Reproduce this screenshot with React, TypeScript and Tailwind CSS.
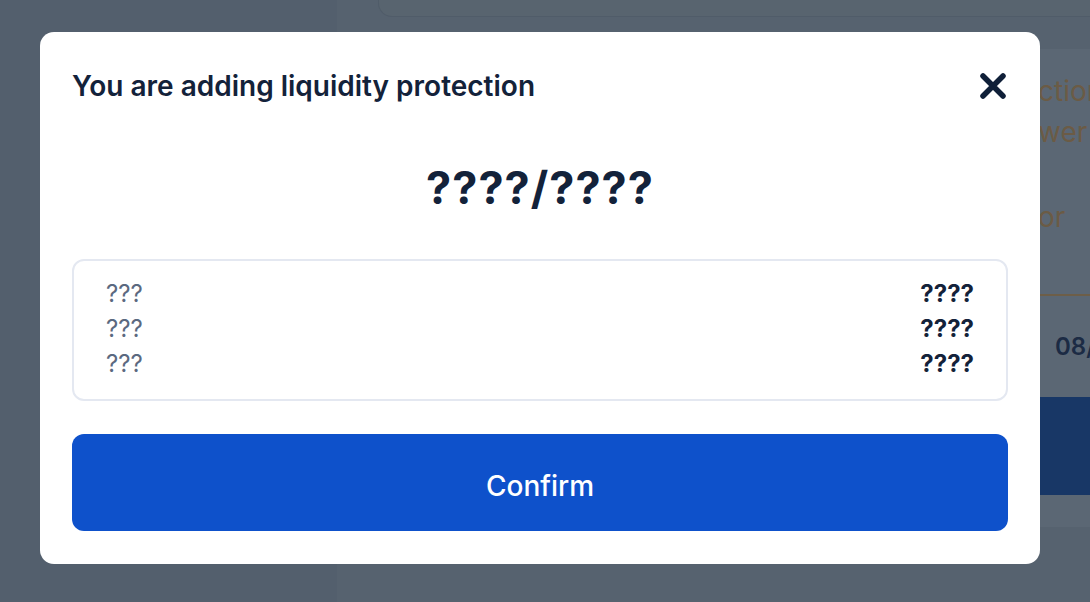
import React from "react"

// Confirm dialog for adding liquidity protection, over a dimmed page.

const rows = [
  { label: "???", value: "????" },
  { label: "???", value: "????" },
  { label: "???", value: "????" },
]

function CloseIcon() {
  return (
    <svg width="28" height="28" viewBox="0 0 28 28" fill="none">
      <path d="M4 4L24 24M24 4L4 24" stroke="#0f1f38" strokeWidth="5.5" strokeLinecap="round" />
    </svg>
  )
}

function Backdrop() {
  return (
    <div className="flex h-full w-full">
      <aside className="w-[337px] shrink-0 h-full bg-[#535f6d]" />
      <main className="flex-1 flex flex-col pl-[41px] overflow-hidden">
        <div className="h-[18px] -mt-px w-[800px] rounded-b-[14px] border border-t-0 border-[#505c69] bg-[#58646f]" />
        <div className="mt-[32px] w-[800px] h-[478px] bg-[#5b6774] rounded-[14px] flex flex-col overflow-hidden">
          <div className="h-[247px] border-b-2 border-[#6d5e48] pl-[660px] pt-[22px] text-[28px] leading-[41px] text-[#6b5b45] whitespace-nowrap">
            <div>ction is active</div>
            <div>wer than</div>
            <div className="mt-[44px]">or</div>
          </div>
          <div className="h-[101px] flex items-center pl-[677px] text-[24px] font-semibold text-[#1c2b44] whitespace-nowrap">
            08/12/2024
          </div>
          <div className="h-[98px] bg-[#183766]" />
        </div>
      </main>
    </div>
  )
}

export default function App() {
  return (
    <div className="relative w-full h-[602px] overflow-hidden bg-[#56626f] font-['Inter','Noto_Sans',sans-serif]">
      <Backdrop />

      {/* modal */}
      <div className="absolute left-[40px] top-[32px] w-[1000px] h-[532px] bg-white rounded-[14px] px-[32px] pt-[32px] pb-[33px] flex flex-col">
        <div className="h-[44px] flex items-center justify-between pr-px">
          <h2 className="text-[28px] font-semibold text-[#13223a]">
            You are adding liquidity protection
          </h2>
          <button className="w-[28px] h-[28px] flex items-center justify-center">
            <CloseIcon />
          </button>
        </div>

        <div className="mt-[58px] text-center text-[45px] leading-[44px] font-bold text-[#13223a] tracking-[1px]">
          ????/????
        </div>

        <div className="mt-[49px] h-[142px] border-2 border-[#e4e8f1] rounded-[12px] px-[32px] pt-[15px] flex flex-col">
          {rows.map((r, i) => (
            <div key={i} className="h-[35px] flex items-center justify-between text-[24px]">
              <span className="text-[#5b6980]">{r.label}</span>
              <span className="font-bold text-[#13223a]">{r.value}</span>
            </div>
          ))}
        </div>

        <button className="mt-[33px] h-[97px] w-full rounded-[12px] bg-[#0e51cb] pt-[7px] text-white text-[28px] font-medium">
          Confirm
        </button>
      </div>
    </div>
  )
}
